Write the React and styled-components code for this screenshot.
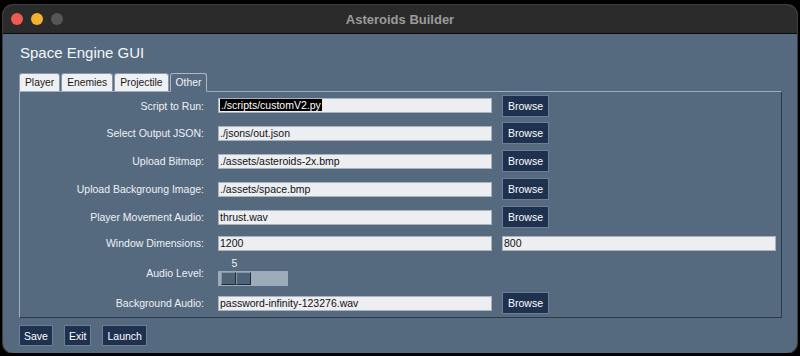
import styled, { createGlobalStyle } from "styled-components";

const GlobalStyle = createGlobalStyle`
  html, body {
    margin: 0;
    padding: 0;
    background: #000;
  }
  body {
    font-family: "Liberation Sans", Arial, sans-serif;
  }
`;

const Window = styled.div`
  margin: 5px 0 0 3px;
  width: 794px;
  height: 348px;
  border-radius: 10px;
  overflow: hidden;
  background: #556a7f;
  display: flex;
  flex-direction: column;
  box-shadow: 0 0 0 1px #3c3c3c;
`;

const TitleBar = styled.div`
  height: 28px;
  flex-shrink: 0;
  background: #2b2b2b;
  border-bottom: 1px solid #0a0a0a;
  display: grid;
  grid-template-columns: 1fr auto 1fr;
  align-items: center;
  padding: 0 8px;
`;

const Lights = styled.div`
  display: flex;
  gap: 8px;
`;

const Light = styled.span`
  width: 12px;
  height: 12px;
  border-radius: 50%;
  background: ${(p) => p.color};
`;

const Title = styled.div`
  font-size: 13px;
  font-weight: 700;
  color: #9b9b9b;
`;

const Body = styled.div`
  flex: 1;
  display: flex;
  flex-direction: column;
  padding: 10px 15px 7px 16px;
`;

const Heading = styled.h1`
  margin: 0 0 11px 1px;
  font-size: 15px;
  font-weight: 400;
  line-height: 18px;
  color: #f4f6f8;
`;

const Tabs = styled.div`
  display: flex;
  height: 18px;
`;

const Tab = styled.div`
  box-sizing: border-box;
  height: ${(p) => (p.active ? "19px" : "18px")};
  padding: 0 5px;
  margin-right: 1px;
  display: flex;
  align-items: center;
  font-size: 10.3px;
  border: 1px solid ${(p) => (p.active ? "#a8b8ca" : "#8b97a4")};
  border-bottom: ${(p) => (p.active ? "1px solid #556a7f" : "none")};
  border-radius: 3px 3px 0 0;
  background: ${(p) => (p.active ? "#556a7f" : "#eef0f3")};
  color: ${(p) => (p.active ? "#f2f4f6" : "#1a1a1a")};
  position: relative;
  z-index: 1;
`;

const Panel = styled.div`
  border: 1px solid;
  border-color: #9cafc4 #2c3b4b #2c3b4b #9cafc4;
  display: flex;
  flex-direction: column;
  padding-bottom: 2px;
`;

const Row = styled.div`
  display: flex;
  align-items: ${(p) => p.align || "center"};
  height: ${(p) => p.h}px;
`;

const Label = styled.div`
  width: 184px;
  margin-right: 14px;
  text-align: right;
  font-size: 10.5px;
  color: #eef1f4;
  align-self: center;
`;

const Entry = styled.div`
  box-sizing: border-box;
  width: 274px;
  height: 15px;
  padding: 0 1px;
  background: #eceef2;
  border: 1px solid #aab2bc;
  font-size: 10.5px;
  line-height: 13px;
  color: #111;
  white-space: nowrap;
  overflow: hidden;
  & + & {
    margin-left: 10px;
  }
`;

const Selected = styled.span`
  background: #000;
  color: #fff;
  padding: 0 1px;
`;

const Button = styled.button`
  box-sizing: border-box;
  height: ${(p) => (p.small ? "21px" : "22px")};
  padding: ${(p) => (p.small ? "0 4px" : "0 5px")};
  margin-left: ${(p) => (p.small ? "0" : "10px")};
  background: #1e3250;
  border: 1px solid #6b7e96;
  color: #fff;
  font-family: "Liberation Sans", Arial, sans-serif;
  font-size: 10.5px;
`;

const Slider = styled.div`
  display: flex;
  flex-direction: column;
  align-items: flex-start;
  padding-top: 2px;
`;

const SliderValue = styled.div`
  width: 33px;
  text-align: center;
  font-size: 10.5px;
  line-height: 12px;
  color: #eef1f4;
  margin-bottom: 2px;
`;

const Trough = styled.div`
  box-sizing: border-box;
  width: 70px;
  height: 15px;
  background: #9dabb9;
  padding: 1px 0 0 3px;
  display: flex;
`;

const Knob = styled.div`
  box-sizing: border-box;
  width: 15px;
  height: 13px;
  background: #4f6378;
  border: 1px solid;
  border-color: #8796a7 #1f2c3b #1f2c3b #8796a7;
`;

const Footer = styled.div`
  display: flex;
  gap: 11px;
  margin-top: 7px;
`;

const fileRows = [
  { label: "Select Output JSON:", value: "./jsons/out.json" },
  { label: "Upload Bitmap:", value: "./assets/asteroids-2x.bmp" },
  { label: "Upload Backgroung Image:", value: "./assets/space.bmp" },
  { label: "Player Movement Audio:", value: "thrust.wav" },
];

export default function App() {
  return (
    <>
      <GlobalStyle />
      <Window>
        <TitleBar>
          <Lights>
            <Light color="#ee5b53" />
            <Light color="#f4b131" />
            <Light color="#565656" />
          </Lights>
          <Title>Asteroids Builder</Title>
          <div />
        </TitleBar>
        <Body>
          <Heading>Space Engine GUI</Heading>
          <Tabs>
            <Tab>Player</Tab>
            <Tab>Enemies</Tab>
            <Tab>Projectile</Tab>
            <Tab active>Other</Tab>
          </Tabs>
          <Panel>
            <Row h={27}>
              <Label>Script to Run:</Label>
              <Entry>
                <Selected>./scripts/customV2.py</Selected>
              </Entry>
              <Button>Browse</Button>
            </Row>
            {fileRows.map((r) => (
              <Row h={28} key={r.label}>
                <Label>{r.label}</Label>
                <Entry>{r.value}</Entry>
                <Button>Browse</Button>
              </Row>
            ))}
            <Row h={24}>
              <Label>Window Dimensions:</Label>
              <Entry>1200</Entry>
              <Entry>800</Entry>
            </Row>
            <Row h={36} align="flex-start">
              <Label>Audio Level:</Label>
              <Slider>
                <SliderValue>5</SliderValue>
                <Trough>
                  <Knob />
                  <Knob />
                </Trough>
              </Slider>
            </Row>
            <Row h={24}>
              <Label>Background Audio:</Label>
              <Entry>password-infinity-123276.wav</Entry>
              <Button>Browse</Button>
            </Row>
          </Panel>
          <Footer>
            <Button small>Save</Button>
            <Button small>Exit</Button>
            <Button small>Launch</Button>
          </Footer>
        </Body>
      </Window>
    </>
  );
}
